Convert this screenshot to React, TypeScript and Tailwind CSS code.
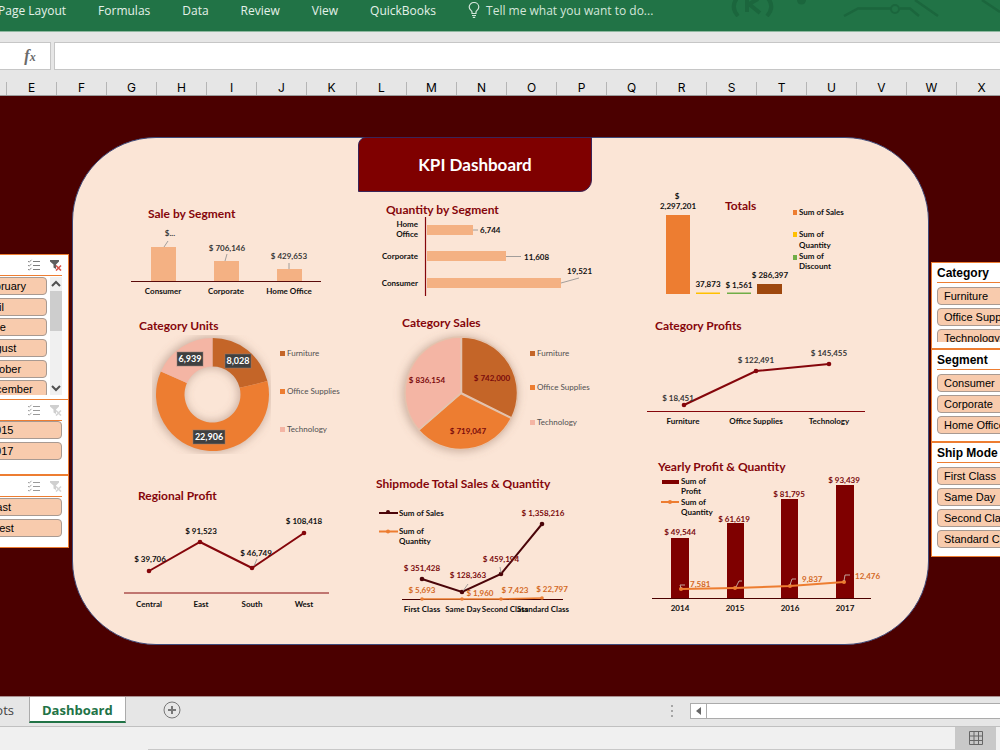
import { ReactNode } from "react";

const COLUMNS = "EFGHIJKLMNOPQRSTUVWXYZ".split("");

const TABS = ["Page Layout", "Formulas", "Data", "Review", "View", "QuickBooks"];

/* ---------- chart helpers ---------- */

type LabelProps = {
  x: number;
  y: number;
  children: ReactNode;
  anchor?: "start" | "middle" | "end";
  className?: string;
};

const Label = ({ x, y, children, anchor = "middle", className = "fill-[#101010] font-bold" }: LabelProps) => (
  <text x={x} y={y} textAnchor={anchor} className={`text-[8px] ${className}`}>
    {children}
  </text>
);

const Chart = ({
  title,
  x,
  y,
  height,
  children,
}: {
  title: string;
  x: number;
  y: number;
  height: number;
  children: ReactNode;
}) => (
  <svg viewBox={`0 0 285 ${height}`} className="block w-full overflow-visible" role="img" aria-label={title}>
    {children}
    <text x={x} y={y} className="fill-[#85060b] text-[12px] font-bold">
      {title}
    </text>
  </svg>
);

const slice = (cx: number, cy: number, r: number, inner: number, from: number, to: number) => {
  const at = (deg: number, radius: number) => {
    const a = ((deg - 90) * Math.PI) / 180;
    return `${cx + radius * Math.cos(a)} ${cy + radius * Math.sin(a)}`;
  };
  const large = to - from > 180 ? 1 : 0;
  return `M${at(from, r)} A${r} ${r} 0 ${large} 1 ${at(to, r)} L${at(to, inner)} A${inner} ${inner} 0 ${large} 0 ${at(from, inner)} Z`;
};

const Line = ({ points, color, width = 2, dot = 2.3 }: { points: number[][]; color: string; width?: number; dot?: number }) => (
  <g>
    <polyline points={points.map((p) => p.join(",")).join(" ")} fill="none" stroke={color} strokeWidth={width} />
    {points.map(([px, py]) => (
      <circle key={px} cx={px} cy={py} r={dot} fill={color} />
    ))}
  </g>
);

const CategoryLegend = ({ x, rows }: { x: number; rows: number[] }) => (
  <g>
    {["Furniture", "Office Supplies", "Technology"].map((name, i) => (
      <g key={name}>
        <rect x={x} y={rows[i] - 2} width={5} height={5} fill={["#c46528", "#ed7d31", "#f4b5a4"][i]} />
        <Label x={x + 7} y={rows[i] + 3} anchor="start" className="fill-[#505050]">
          {name}
        </Label>
      </g>
    ))}
  </g>
);

const GREY = "fill-[#383838] font-bold";
const MAROON = "fill-[#7a0a0c] font-bold";
const ORANGE = "fill-[#d3681f] font-bold";

/* ---------- charts ---------- */

const SaleBySegment = () => (
  <Chart title="Sale by Segment" x={75} y={26} height={118}>
    <g fill="#f4b183">
      <rect x={78} y={55} width={25} height={34} />
      <rect x={141} y={69} width={25} height={20} />
      <rect x={204} y={77} width={25} height={12} />
    </g>
    <path d="M91 55L95 49M152 69L154 62M216 77V71" stroke="#8c8c8c" strokeWidth={0.8} />
    <path d="M58 89.5H248" stroke="#5a0a0a" strokeWidth={1.2} />
    <Label x={97} y={44} className={GREY}>$...</Label>
    <Label x={154} y={59} className={GREY}>$ 706,146</Label>
    <Label x={216} y={67} className={GREY}>$ 429,653</Label>
    <Label x={90} y={102}>Consumer</Label>
    <Label x={153} y={102}>Corporate</Label>
    <Label x={216} y={102}>Home Office</Label>
  </Chart>
);

const QuantityBySegment = () => (
  <Chart title="Quantity by Segment" x={28} y={22} height={118}>
    <g fill="#f4b183">
      <rect x={69} y={33} width={46} height={10} />
      <rect x={69} y={59} width={79} height={10} />
      <rect x={69} y={86} width={134} height={10} />
    </g>
    <path d="M115 38H120M148 64.5H163M203 91L221 86" stroke="#8c8c8c" strokeWidth={0.8} fill="none" />
    <path d="M67.5 25V104" stroke="#85060b" strokeWidth={1.2} />
    <Label x={60} y={35} anchor="end">Home</Label>
    <Label x={60} y={45} anchor="end">Office</Label>
    <Label x={60} y={67} anchor="end">Corporate</Label>
    <Label x={60} y={94} anchor="end">Consumer</Label>
    <Label x={122} y={41} anchor="start">6,744</Label>
    <Label x={166} y={68} anchor="start">11,608</Label>
    <Label x={209} y={82} anchor="start">19,521</Label>
  </Chart>
);

const Totals = () => (
  <Chart title="Totals" x={82} y={18} height={118}>
    <rect x={23} y={23} width={24} height={79} fill="#ed7d31" />
    <rect x={53} y={100.5} width={24} height={1.5} fill="#ffc000" />
    <rect x={84} y={100.5} width={24} height={1.5} fill="#70ad47" />
    <rect x={114} y={92} width={25} height={10} fill="#9e480e" />
    <Label x={34} y={7}>$</Label>
    <Label x={35} y={17}>2,297,201</Label>
    <Label x={65} y={95}>37,873</Label>
    <Label x={96} y={96}>$ 1,561</Label>
    <Label x={127} y={86}>$ 286,397</Label>
    <rect x={150} y={18} width={4} height={5} fill="#ed7d31" />
    <rect x={150} y={40} width={4} height={5} fill="#ffc000" />
    <rect x={150} y={63} width={4} height={5} fill="#70ad47" />
    <Label x={156} y={23} anchor="start">Sum of Sales</Label>
    <Label x={156} y={45} anchor="start">Sum of</Label>
    <Label x={156} y={56} anchor="start">Quantity</Label>
    <Label x={156} y={67} anchor="start">Sum of</Label>
    <Label x={156} y={77} anchor="start">Discount</Label>
  </Chart>
);

const CategoryUnits = () => (
  <Chart title="Category Units" x={66} y={20} height={145}>
    <defs>
      <filter id="soft" x="-20%" y="-20%" width="140%" height="140%">
        <feGaussianBlur stdDeviation="4" />
      </filter>
    </defs>
    <circle cx={138.5} cy={84.5} r={42.5} fill="none" stroke="#8a6a58" strokeOpacity={0.4} strokeWidth={32} filter="url(#soft)" />
    <path d={slice(139.5, 84.5, 56.5, 28, 0, 76.3)} fill="#c46528" />
    <path d={slice(139.5, 84.5, 56.5, 28, 76.3, 294)} fill="#ed7d31" />
    <path d={slice(139.5, 84.5, 56.5, 28, 294, 360)} fill="#f4b5a4" />
    <g fill="#404040" stroke="#8f8078" strokeOpacity={0.5} strokeWidth={1}>
      <rect x={104} y={42} width={26} height={14} />
      <rect x={152} y={44} width={26} height={14} />
      <rect x={120} y={120} width={32} height={14} />
    </g>
    <g className="fill-white text-[9px] font-bold" textAnchor="middle">
      <text x={117} y={52}>6,939</text>
      <text x={165} y={54}>8,028</text>
      <text x={136} y={130}>22,906</text>
    </g>
    <CategoryLegend x={207} rows={[43, 81, 119]} />
  </Chart>
);

const CategorySales = () => (
  <Chart title="Category Sales" x={44} y={17} height={145}>
    <circle cx={102} cy={84} r={58} fill="#8a6a58" fillOpacity={0.4} filter="url(#soft)" />
    <g stroke="#e3c3ae" strokeWidth={1.5} strokeLinejoin="round">
      <path d={slice(103.5, 83, 56, 0, 0, 116.3)} fill="#c46528" />
      <path d={slice(103, 83.5, 56, 0, 116.3, 229)} fill="#ed7d31" />
      <path d={slice(103, 83, 56, 0, 229, 360)} fill="#f4b5a4" />
    </g>
    <Label x={134} y={71} className={MAROON}>$ 742,000</Label>
    <Label x={110} y={124} className={MAROON}>$ 719,047</Label>
    <Label x={69} y={73} className={MAROON}>$ 836,154</Label>
    <CategoryLegend x={172} rows={[43, 77, 112]} />
  </Chart>
);

const CategoryProfits = () => (
  <Chart title="Category Profits" x={12} y={20} height={145}>
    <path d="M4 101.5H222" stroke="#85060b" strokeWidth={1} />
    <Line points={[[41, 95], [113, 61], [186, 54]]} color="#85060b" />
    <Label x={35} y={91} className={GREY}>$ 18,451</Label>
    <Label x={113} y={53} className={GREY}>$ 122,491</Label>
    <Label x={186} y={46} className={GREY}>$ 145,455</Label>
    <Label x={40} y={114}>Furniture</Label>
    <Label x={113} y={114}>Office Supplies</Label>
    <Label x={186} y={114}>Technology</Label>
  </Chart>
);

const RegionalProfit = () => (
  <Chart title="Regional Profit" x={65} y={45} height={175}>
    <path d="M51 138H256" stroke="#85060b" strokeWidth={1} />
    <Line points={[[76, 116], [127, 87], [179, 113], [231, 78]]} color="#85060b" />
    <path d="M181 111L184 104" stroke="#8c8c8c" strokeWidth={0.8} />
    <Label x={77} y={107}>$ 39,706</Label>
    <Label x={128} y={79}>$ 91,523</Label>
    <Label x={183} y={101}>$ 46,749</Label>
    <Label x={231} y={69}>$ 108,418</Label>
    <Label x={76} y={152}>Central</Label>
    <Label x={128} y={152}>East</Label>
    <Label x={179} y={152}>South</Label>
    <Label x={231} y={152}>West</Label>
  </Chart>
);

const ShipmodeTotals = () => (
  <Chart title="Shipmode Total Sales & Quantity" x={18} y={33} height={175}>
    <path d="M44 144.5H205" stroke="#4b0000" strokeWidth={1} />
    <Line points={[[64, 124], [104, 137], [143, 119], [184, 69]]} color="#4b0509" />
    <Line points={[[64, 144], [104, 144], [143, 144], [184, 143]]} color="#ed7d31" width={1.6} dot={1.8} />
    <path d="M105 136L110 129M143 118L142 112" stroke="#8c8c8c" strokeWidth={0.8} />
    <path d="M21 58H40" stroke="#4b0509" strokeWidth={2} />
    <circle cx={30} cy={57} r={2} fill="#4b0509" />
    <path d="M21 76.5H40" stroke="#ed7d31" strokeWidth={2} />
    <circle cx={30} cy={76.5} r={2} fill="#ed7d31" />
    <Label x={41} y={61} anchor="start">Sum of Sales</Label>
    <Label x={41} y={79} anchor="start">Sum of</Label>
    <Label x={41} y={89} anchor="start">Quantity</Label>
    <Label x={64} y={116} className={MAROON}>$ 351,428</Label>
    <Label x={110} y={123} className={MAROON}>$ 128,363</Label>
    <Label x={143} y={107} className={MAROON}>$ 459,194</Label>
    <Label x={185} y={61} className={MAROON}>$ 1,358,216</Label>
    <Label x={64} y={138} className={ORANGE}>$ 5,693</Label>
    <Label x={122} y={141} className={ORANGE}>$ 1,960</Label>
    <Label x={157} y={138} className={ORANGE}>$ 7,423</Label>
    <Label x={194} y={137} className={ORANGE}>$ 22,797</Label>
    <Label x={64} y={157}>First Class</Label>
    <Label x={105} y={157}>Same Day</Label>
    <Label x={147} y={157}>Second Class</Label>
    <Label x={185} y={157}>Standard Class</Label>
  </Chart>
);

const YearlyProfit = () => (
  <Chart title="Yearly Profit & Quantity" x={15} y={16} height={175}>
    <g fill="#7f0000">
      <rect x={28} y={83} width={18} height={60} />
      <rect x={84} y={68} width={17} height={75} />
      <rect x={138} y={44} width={17} height={99} />
      <rect x={193} y={30} width={18} height={113} />
      <rect x={19} y={25} width={17} height={4} />
    </g>
    <path d="M9 143.5H228" stroke="#4b0000" strokeWidth={1.2} />
    <Line points={[[38, 134], [92, 133], [147, 131], [201, 127]]} color="#ed7d31" dot={2} />
    <path
      d="M38 133L37 130H42M93 132L96 126H99M147 130L149 124H153M201 126L202 120H207"
      fill="none"
      stroke="#c9b4ac"
      strokeWidth={0.9}
    />
    <path d="M18 47H36" stroke="#ed7d31" strokeWidth={2} />
    <circle cx={27} cy={47} r={2} fill="#ed7d31" />
    <Label x={38} y={29} anchor="start">Sum of</Label>
    <Label x={38} y={39} anchor="start">Profit</Label>
    <Label x={38} y={50} anchor="start">Sum of</Label>
    <Label x={38} y={60} anchor="start">Quantity</Label>
    <Label x={37} y={80} className={MAROON}>$ 49,544</Label>
    <Label x={91} y={67} className={MAROON}>$ 61,619</Label>
    <Label x={146} y={42} className={MAROON}>$ 81,795</Label>
    <Label x={201} y={28} className={MAROON}>$ 93,439</Label>
    <Label x={47} y={132} anchor="start" className={ORANGE}>7,581</Label>
    <Label x={159} y={127} anchor="start" className={ORANGE}>9,837</Label>
    <Label x={212} y={124} anchor="start" className={ORANGE}>12,476</Label>
    <Label x={37} y={156}>2014</Label>
    <Label x={92} y={156}>2015</Label>
    <Label x={147} y={156}>2016</Label>
    <Label x={202} y={156}>2017</Label>
  </Chart>
);

/* ---------- slicers ---------- */

const SlicerTools = ({ active = false }: { active?: boolean }) => (
  <div className="flex h-5 items-center justify-end gap-2.5">
    <button type="button" aria-label="Multi-select">
      <svg viewBox="0 0 13 12" className="h-3 w-[13px]" fill="none" stroke={active ? "#7e7e7e" : "#9a9a9a"}>
        <path d="M6 2.5H13M6 6.5H13M6 10.5H13" />
        <path d="M1 2L2.2 3.2L4.5 .8M1 6L2.2 7.2L4.5 4.8M1 10L2.2 11.2L4.5 8.8" strokeWidth={0.9} />
      </svg>
    </button>
    <button type="button" aria-label="Clear filter">
      <svg viewBox="0 0 12 12" className="size-3">
        <path d="M0 1H9V2.5L6 5.5V10L3.5 8.5V5.5L0 2.5Z" fill={active ? "#5f5f5f" : "#cfcfcf"} />
        <path d="M6 6.5L11 11.5M11 6.5L6 11.5" stroke={active ? "#d9534a" : "#d5d5d5"} strokeWidth={1.6} />
      </svg>
    </button>
  </div>
);

const SlicerButton = ({ children }: { children: ReactNode }) => (
  <button
    type="button"
    className="block h-[18px] w-full shrink-0 rounded border border-[#a89a92] bg-[#f8cbad] pl-1.5 text-left text-[11px] leading-4 whitespace-nowrap text-black"
  >
    {children}
  </button>
);

const RightSlicer = ({ title, items, className }: { title: string; items: string[]; className: string }) => (
  <section className={`flex flex-col border border-[#ed7d31] bg-white pr-1 pb-1.5 pl-[5px] ${className}`}>
    <h2 className="h-5 shrink-0 border-b border-[#ed7d31] text-[12px] leading-[21px] font-bold whitespace-nowrap text-black">
      {title}
    </h2>
    <div className="mt-1 flex min-h-0 flex-col gap-[3px] overflow-hidden">
      {items.map((item) => (
        <SlicerButton key={item}>{item}</SlicerButton>
      ))}
    </div>
  </section>
);

const LeftSlicers = () => (
  <aside className="mt-[158px] w-[69px] shrink-0 overflow-hidden font-['Liberation_Sans',sans-serif]">
    <div className="-ml-[30px] w-[99px]">
      <section className="h-[146px] border border-[#ed7d31] bg-white pr-1.5 pl-1">
        <div className="border-b border-[#ed7d31]">
          <SlicerTools active />
        </div>
        <div className="mt-px flex h-[118px] gap-[3px] overflow-hidden">
          <div className="grid h-[124px] flex-1 grid-rows-6">
            {["February", "April", "June", "August", "October", "December"].map((month) => (
              <SlicerButton key={month}>{month}</SlicerButton>
            ))}
          </div>
          <div className="flex w-3 flex-col items-center bg-[#f0f0f0]">
            <svg viewBox="0 0 12 14" className="h-3.5 w-3" fill="none" stroke="#505050" strokeWidth={2}>
              <path d="M2 9L6 5L10 9" />
            </svg>
            <div className="h-10 w-full bg-[#cdcdcd]" />
            <svg viewBox="0 0 12 14" className="mt-auto h-3.5 w-3" fill="none" stroke="#505050" strokeWidth={2}>
              <path d="M2 5L6 9L10 5" />
            </svg>
          </div>
        </div>
      </section>
      <section className="h-[75px] border border-t-0 border-[#ed7d31] bg-white pr-1.5 pl-[11px]">
        <div className="border-b border-[#ed7d31]">
          <SlicerTools />
        </div>
        <div className="flex flex-col gap-[3px]">
          <SlicerButton>2015</SlicerButton>
          <SlicerButton>2017</SlicerButton>
        </div>
      </section>
      <section className="h-[73px] border border-[#ed7d31] bg-white pr-1.5 pl-[11px]">
        <div className="border-b border-[#ed7d31]">
          <SlicerTools />
        </div>
        <div className="mt-px flex flex-col gap-[3px]">
          <SlicerButton>East</SlicerButton>
          <SlicerButton>West</SlicerButton>
        </div>
      </section>
    </div>
  </aside>
);

const RightSlicers = () => (
  <aside className="mt-[166px] w-[69px] shrink-0 overflow-hidden font-['Liberation_Sans',sans-serif]">
    <div className="w-[130px]">
      <RightSlicer title="Category" items={["Furniture", "Office Supplies", "Technology"]} className="h-[87px]" />
      <RightSlicer title="Segment" items={["Consumer", "Corporate", "Home Office"]} className="h-[93px]" />
      <RightSlicer title="Ship Mode" items={["First Class", "Same Day", "Second Class", "Standard Class"]} className="h-[115px]" />
    </div>
  </aside>
);

/* ---------- window ---------- */

const Ribbon = () => (
  <header className="relative h-8 overflow-hidden border-b border-[#8fb8a0] bg-[#217346]">
    <svg viewBox="0 0 280 17" className="absolute top-0 right-0 h-[17px] w-[280px]" fill="none" stroke="#1b663d" strokeWidth={2.5}>
      <path d="M19 -4Q9 6 18 16M46 -4Q56 6 47 16M27 0V12M38 -1L29 4L40 13" strokeWidth={4} />
      <path d="M77 0A4 4 0 0 0 86 0" fill="#1b663d" stroke="none" />
      <path d="M124 16L138 8.5H171M180 8.5H190L199 16M195 0L218 16M262 0L280 12" />
      <circle cx={175} cy={9} r={4} strokeWidth={2} />
    </svg>
    <nav className="relative -ml-0.5 flex gap-8 text-[12px] leading-[22px] whitespace-nowrap text-[#e4f1e9]">
      {TABS.map((tab) => (
        <a key={tab} href="#">
          {tab}
        </a>
      ))}
      <a href="#" className="flex gap-1.5 text-[#d3e6da]">
        <svg viewBox="0 0 12 16" className="mt-0.5 h-4 w-3" fill="none" stroke="#d3e6da" strokeWidth={1.2}>
          <path d="M4 11.5V10C4 8.6 1.2 7.8 1.2 5A4.8 4.5 0 0 1 10.8 5C10.8 7.8 8 8.6 8 10V11.5Z" />
          <path d="M4 13.5H8M4.8 15.4H7.2" />
        </svg>
        Tell me what you want to do...
      </a>
    </nav>
  </header>
);

const FormulaBar = () => (
  <div className="flex gap-[3px] bg-[#e6e6e6] py-2.5">
    <button
      type="button"
      aria-label="Insert function"
      className="h-7 w-[51px] border border-l-0 border-[#c6c6c6] bg-white pl-2.5 font-['Liberation_Serif',serif] text-[16px] leading-6 font-bold text-[#6a6a6a] italic"
    >
      f<span className="text-[12px]">x</span>
    </button>
    <input aria-label="Formula" className="h-7 min-w-0 flex-1 border border-r-0 border-[#c6c6c6] bg-white px-2 outline-none" />
  </div>
);

const ColumnHeaders = () => (
  <div className="flex h-4 items-end overflow-hidden border-b border-[#9b9b9b] bg-[#e6e6e6] pl-1.5 font-['Inter',sans-serif] text-[12px] text-black">
    {COLUMNS.map((letter) => (
      <div key={letter} className="h-[13px] w-[50px] shrink-0 border-l border-[#b5b5b5] text-center leading-[12px]">
        {letter}
      </div>
    ))}
  </div>
);

const SheetTabs = () => (
  <div className="flex h-[31px] items-start justify-between border-t border-b border-t-[#a98f8f] border-b-[#c0c0c0] bg-[#e6e6e6]">
    <div className="flex items-start">
      <div className="flex w-[29px] justify-end overflow-hidden pr-[15px] text-[13px] leading-[27px] text-[#444]">Pivots</div>
      <button
        type="button"
        className="h-[26px] border-x border-b-2 border-x-[#ababab] border-b-[#217346] bg-white px-3 text-[13px] leading-[26px] font-bold text-[#217346]"
      >
        Dashboard
      </button>
      <button type="button" aria-label="New sheet" className="mt-1 ml-[37px]">
        <svg viewBox="0 0 18 18" className="size-[18px]" fill="none" stroke="#777">
          <circle cx={9} cy={9} r={8} />
          <path d="M9 5V13M5 9H13" strokeWidth={2} />
        </svg>
      </button>
    </div>
    <div className="mt-1.5 flex w-[329px] items-center gap-4">
      <div className="flex w-[3px] flex-col gap-[3px]">
        <i className="size-0.5 bg-[#a6a6a6]" />
        <i className="size-0.5 bg-[#a6a6a6]" />
        <i className="size-0.5 bg-[#a6a6a6]" />
      </div>
      <div className="flex h-4 flex-1 border border-r-0 border-[#ababab] bg-white">
        <button type="button" aria-label="Scroll left" className="flex w-4 items-center justify-center border-r border-[#ababab]">
          <svg viewBox="0 0 5 8" className="h-2 w-[5px]" fill="#666">
            <path d="M5 0V8L0 4Z" />
          </svg>
        </button>
      </div>
    </div>
  </div>
);

const StatusBar = () => (
  <footer className="flex h-[23px] items-end bg-[#f0f0f0] pr-1">
    <div className="ml-[148px] h-px flex-1 bg-[#c8c8c8]" />
    <button type="button" aria-label="Normal view" className="flex h-full w-[41px] items-center justify-center bg-[#c8c8c8]">
      <svg viewBox="0 0 16 15" className="h-[15px] w-4" fill="none" stroke="#666">
        <path d="M1.5 .5H14.5V13.5H1.5ZM1.5 5H14.5M1.5 9.5H14.5M6 .5V13.5M10.5 .5V13.5" />
      </svg>
    </button>
  </footer>
);

export default function App() {
  return (
    <div className="flex min-h-screen flex-col overflow-hidden bg-[#4b0000] font-['Open_Sans',sans-serif]">
      <Ribbon />
      <FormulaBar />
      <ColumnHeaders />
      <div className="flex flex-1 items-start">
        <LeftSlicers />
        <main className="mt-[41px] mr-0.5 ml-[3px] flex-1 rounded-[84px] border border-[#3f4a7a] bg-[#fbe5d6] pb-[14px] font-['Lato',sans-serif]">
          <div className="grid grid-cols-3">
            <h1 className="col-start-2 -mt-px h-[55px] w-[234px] rounded-tl-lg rounded-br-xl border border-[#3a2458] bg-[#7f0000] text-center text-[17px] leading-[54px] font-bold text-white">
              KPI Dashboard
            </h1>
          </div>
          <div className="grid grid-cols-3">
            <SaleBySegment />
            <QuantityBySegment />
            <Totals />
            <CategoryUnits />
            <CategorySales />
            <CategoryProfits />
            <RegionalProfit />
            <ShipmodeTotals />
            <YearlyProfit />
          </div>
        </main>
        <RightSlicers />
      </div>
      <SheetTabs />
      <StatusBar />
    </div>
  );
}
